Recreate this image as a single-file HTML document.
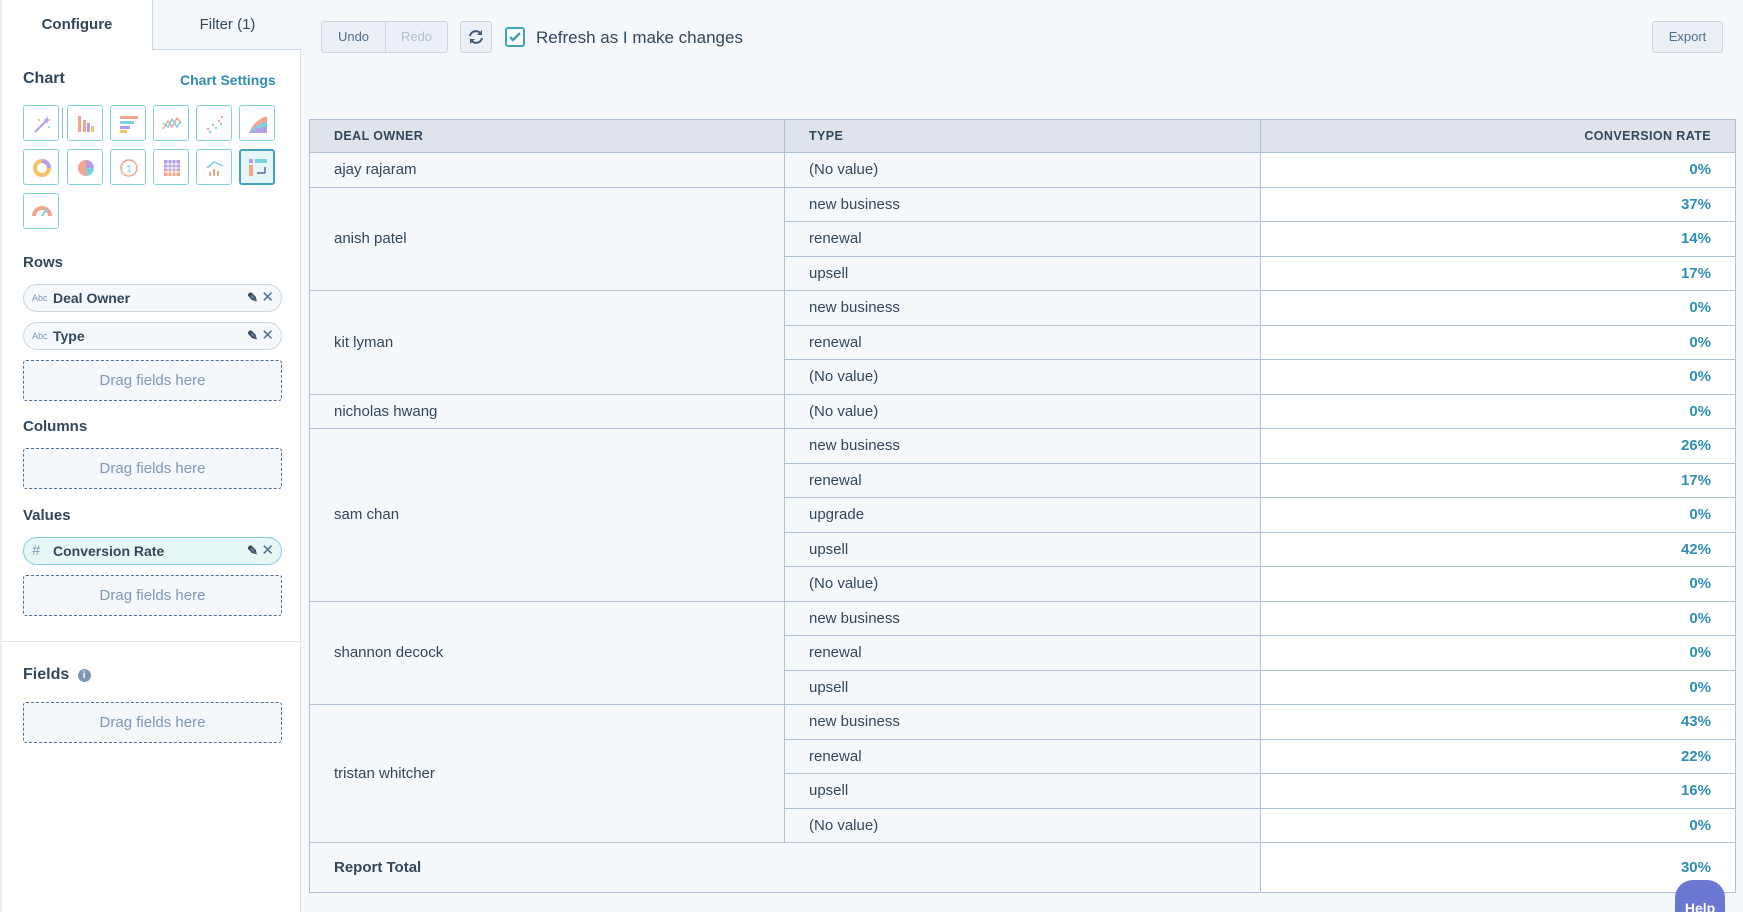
<!DOCTYPE html>
<html style="overflow:hidden;width:1743px;height:912px"><head><meta charset="utf-8"><style>
*{box-sizing:border-box;margin:0;padding:0}
body{width:1743px;height:912px;overflow:hidden;background:#f5f8fa;font-family:"Liberation Sans",sans-serif;color:#33475b;position:relative}
.side{position:absolute;left:0;top:0;width:301px;height:912px;background:#fff;border-right:1px solid #dfe3eb;border-left:2px solid #eaf0f6}
.tab{position:absolute;top:0;height:50px;font-size:15px;text-align:center;line-height:50px}
.t1{left:0;width:150px;font-weight:bold;color:#33475b}
.t2{left:150px;width:150px;background:#f5f8fa;border-left:1px solid #cbd6e2;border-bottom:1px solid #cbd6e2;color:#33475b}
.h{position:absolute;left:21px;font-size:15px;font-weight:bold;color:#33475b}
.ic{position:absolute;width:36px;height:36px;border:1px solid #7fd1de;border-radius:3px;background:#fff}
.ic svg{position:absolute;left:7px;top:7px}
.pill{position:absolute;left:21px;width:259px;height:28px;border:1px solid #cbd6e2;border-radius:14px;background:#f5f8fa;font-size:14px;font-weight:bold;line-height:26px;padding-left:29px}
.pill .abc{position:absolute;left:8px;top:0;font-size:9px;font-weight:normal;color:#7c98b6}
.pill .ed{position:absolute;right:23px;top:0;font-size:13px;color:#33475b}
.pill .x{position:absolute;right:7px;top:0;font-size:15px;font-weight:normal;color:#516f90}
.drag{position:absolute;left:21px;width:259px;height:41px;border:1px dashed #516f90;border-radius:3px;background:#f5f8fa;text-align:center;line-height:39px;font-size:15px;color:#7c98b6}
.btn{position:absolute;top:21px;height:32px;border:1px solid #cbd6e2;background:#eaf0f6;font-size:13px;line-height:30px;text-align:center;border-radius:3px;color:#516f90}
table{position:absolute;left:309px;top:119px;width:1427px;border-collapse:collapse;font-size:15px}
td,th{border:1px solid #b0c1d4;padding:0 24px;height:34.5px;background:#f5f8fa;text-align:left;font-weight:normal}
th{background:#dfe3eb;font-size:12.5px;font-weight:bold;letter-spacing:.4px;height:33px}
td.v{background:#fff;text-align:right;color:#2e8fb0;font-weight:bold}
th.v{text-align:right;color:#33475b}
</style></head><body>
<div class="side">
<div class="tab t1">Configure</div><div class="tab t2">Filter (1)</div>
<div class="h" style="top:70px;font-size:16px">Chart</div>
<div style="position:absolute;left:178px;top:72px;font-size:14px;font-weight:bold;color:#2e8fb0">Chart Settings</div>
<div style="position:absolute;left:60px;top:108px;width:1px;height:30px;background:#99aac0"></div>
<div class="ic" style="left:21px;top:105px"><svg width="22" height="22"><path d="M4 19L15 8" stroke="#b49ee8" stroke-width="2"/><path d="M16 3l1 3 3 1-3 1-1 3-1-3-3-1 3-1z" fill="#b49ee8"/><circle cx="8" cy="7" r="1" fill="#f2a58e"/><circle cx="18" cy="14" r="1" fill="#7fd1de"/></svg></div>
<div class="ic" style="left:65px;top:105px"><svg width="22" height="22"><rect x="3" y="3" width="3" height="16" fill="#f2a58e"/><rect x="8" y="7" width="3" height="12" fill="#f2a58e"/><rect x="12" y="10" width="3" height="9" fill="#b49ee8"/><rect x="16" y="13" width="3" height="6" fill="#f5c26b"/></svg></div>
<div class="ic" style="left:108px;top:105px"><svg width="22" height="22"><rect x="2" y="3" width="18" height="3" fill="#f2a58e"/><rect x="2" y="8" width="14" height="3" fill="#7fd1de"/><rect x="2" y="13" width="10" height="3" fill="#b49ee8"/><rect x="2" y="17" width="7" height="3" fill="#f5c26b"/></svg></div>
<div class="ic" style="left:151px;top:105px"><svg width="22" height="22"><path d="M2 16l5-8 4 6 5-9 4 5" fill="none" stroke="#f2a58e" stroke-width="1.5"/><path d="M2 10l5 4 4-8 5 8 4-6" fill="none" stroke="#7fd1de" stroke-width="1.5"/></svg></div>
<div class="ic" style="left:194px;top:105px"><svg width="22" height="22"><g fill="#f2a58e"><circle cx="4" cy="16" r="1.2"/><circle cx="9" cy="12" r="1.2"/><circle cx="15" cy="8" r="1.2"/><circle cx="18" cy="4" r="1.2"/></g><g fill="#7fd1de"><circle cx="6" cy="19" r="1.2"/><circle cx="12" cy="15" r="1.2"/><circle cx="17" cy="11" r="1.2"/></g></svg></div>
<div class="ic" style="left:237px;top:105px"><svg width="22" height="22"><path d="M2 20C6 10 12 6 20 3V20z" fill="#f2a58e"/><path d="M2 20C7 13 13 10 20 9V20z" fill="#7fd1de"/><path d="M2 20C8 16 14 14 20 14V20z" fill="#b49ee8"/></svg></div>
<div class="ic" style="left:21px;top:149px"><svg width="22" height="22"><circle cx="11" cy="11" r="7" fill="none" stroke="#f5c26b" stroke-width="4"/><path d="M11 4a7 7 0 0 1 7 7" fill="none" stroke="#b49ee8" stroke-width="4"/></svg></div>
<div class="ic" style="left:65px;top:149px"><svg width="22" height="22"><circle cx="11" cy="11" r="8" fill="#f2a58e"/><path d="M11 3a8 8 0 0 1 8 8H11z" fill="#b49ee8"/><path d="M19 11a8 8 0 0 1-8 8V11z" fill="#7fd1de"/></svg></div>
<div class="ic" style="left:108px;top:149px"><svg width="22" height="22"><circle cx="11" cy="11" r="8" fill="none" stroke="#f2a58e" stroke-width="1.5"/><text x="11" y="15" font-size="10" text-anchor="middle" fill="#7fd1de" font-family="Liberation Sans">1</text></svg></div>
<div class="ic" style="left:151px;top:149px"><svg width="22" height="22"><rect x="3" y="3" width="16" height="16" fill="#b49ee8"/><rect x="3" y="13" width="16" height="6" fill="#f2a58e"/><path d="M7 3v16M11 3v16M15 3v16M3 7h16M3 11h16M3 15h16" stroke="#fff" stroke-width="1"/></svg></div>
<div class="ic" style="left:194px;top:149px"><svg width="22" height="22"><path d="M3 11l7-6 9 4" fill="none" stroke="#7fd1de" stroke-width="1.5"/><rect x="5" y="15" width="2" height="4" fill="#f2a58e"/><rect x="9" y="12" width="2" height="7" fill="#f2a58e"/><rect x="13" y="14" width="2" height="5" fill="#f2a58e"/></svg></div>
<div class="ic" style="left:237px;top:149px;border:2px solid #42a4ba;background:#e5f5f8"><svg width="22" height="22" style="left:6px;top:6px"><rect x="2" y="2" width="4" height="4" fill="#b49ee8"/><rect x="8" y="2" width="12" height="4" fill="#7fd1de"/><rect x="2" y="8" width="4" height="11" fill="#f2a58e"/><path d="M10 16h8M18 16V10" stroke="#516f90" stroke-width="1.5" fill="none"/></svg></div>
<div class="ic" style="left:21px;top:193px"><svg width="22" height="22"><path d="M3 15a8 8 0 0 1 16 0" fill="none" stroke="#f2a58e" stroke-width="4"/><path d="M11 15l5-7" stroke="#7fd1de" stroke-width="2"/></svg></div>
<div class="h" style="top:254px">Rows</div>
<div class="pill" style="top:284px"><span class="abc">Abc</span>Deal Owner<span class="ed">✎</span><span class="x">✕</span></div>
<div class="pill" style="top:322px"><span class="abc">Abc</span>Type<span class="ed">✎</span><span class="x">✕</span></div>
<div class="drag" style="top:360px">Drag fields here</div>
<div class="h" style="top:418px">Columns</div>
<div class="drag" style="top:448px">Drag fields here</div>
<div class="h" style="top:507px">Values</div>
<div class="pill" style="top:537px;background:#e5f8f6;border-color:#7fd1de"><span class="abc" style="font-size:15px;color:#7c98b6">#</span>Conversion Rate<span class="ed">✎</span><span class="x">✕</span></div>
<div class="drag" style="top:575px">Drag fields here</div>
<div style="position:absolute;left:0;top:641px;width:299px;height:1px;background:#dfe3eb"></div>
<div class="h" style="top:666px;font-size:16px">Fields <span style="display:inline-block;width:13px;height:13px;border-radius:50%;background:#7c98b6;color:#fff;font-size:10px;text-align:center;line-height:13px;vertical-align:1px;margin-left:4px">i</span></div>
<div class="drag" style="top:702px">Drag fields here</div>
</div>
<div class="btn" style="left:321px;width:65px;border-radius:3px 0 0 3px">Undo</div>
<div class="btn" style="left:385px;width:63px;border-radius:0 3px 3px 0;color:#b0c1d4">Redo</div>
<div class="btn" style="left:460px;width:32px"><svg width="18" height="18" style="margin-top:6px" viewBox="0 0 18 18"><path d="M3 8a6 6 0 0 1 11-2M15 10a6 6 0 0 1-11 2" fill="none" stroke="#425b76" stroke-width="2"/><path d="M15 2v5h-5zM3 16v-5h5z" fill="#425b76"/></svg></div>
<div style="position:absolute;left:505px;top:27px;width:20px;height:20px;border:2px solid #42a4ba;border-radius:3px;background:#fff"><svg width="16" height="16"><path d="M3 8l3 3 7-7" fill="none" stroke="#42a4ba" stroke-width="2.5"/></svg></div>
<div style="position:absolute;left:536px;top:28px;font-size:17px;color:#33475b">Refresh as I make changes</div>
<div class="btn" style="left:1652px;width:71px">Export</div>
<table>
<tr><th style="width:475px">DEAL OWNER</th><th style="width:476px">TYPE</th><th class="v">CONVERSION RATE</th></tr>
<tr><td>ajay rajaram</td><td>(No value)</td><td class="v">0%</td></tr>
<tr><td rowspan="3">anish patel</td><td>new business</td><td class="v">37%</td></tr>
<tr><td>renewal</td><td class="v">14%</td></tr>
<tr><td>upsell</td><td class="v">17%</td></tr>
<tr><td rowspan="3">kit lyman</td><td>new business</td><td class="v">0%</td></tr>
<tr><td>renewal</td><td class="v">0%</td></tr>
<tr><td>(No value)</td><td class="v">0%</td></tr>
<tr><td>nicholas hwang</td><td>(No value)</td><td class="v">0%</td></tr>
<tr><td rowspan="5">sam chan</td><td>new business</td><td class="v">26%</td></tr>
<tr><td>renewal</td><td class="v">17%</td></tr>
<tr><td>upgrade</td><td class="v">0%</td></tr>
<tr><td>upsell</td><td class="v">42%</td></tr>
<tr><td>(No value)</td><td class="v">0%</td></tr>
<tr><td rowspan="3">shannon decock</td><td>new business</td><td class="v">0%</td></tr>
<tr><td>renewal</td><td class="v">0%</td></tr>
<tr><td>upsell</td><td class="v">0%</td></tr>
<tr><td rowspan="4">tristan whitcher</td><td>new business</td><td class="v">43%</td></tr>
<tr><td>renewal</td><td class="v">22%</td></tr>
<tr><td>upsell</td><td class="v">16%</td></tr>
<tr><td>(No value)</td><td class="v">0%</td></tr>
<tr><td colspan="2" style="height:50px;font-weight:bold">Report Total</td><td class="v" style="height:50px">30%</td></tr>
</table>
<div style="position:absolute;left:1675px;top:880px;width:50px;height:32px;border-radius:18px 18px 0 0;background:#6a78d1;color:#fff;font-size:14px;font-weight:bold;text-align:center;padding-top:20px;overflow:hidden;line-height:16px">Help</div>
</body></html>
